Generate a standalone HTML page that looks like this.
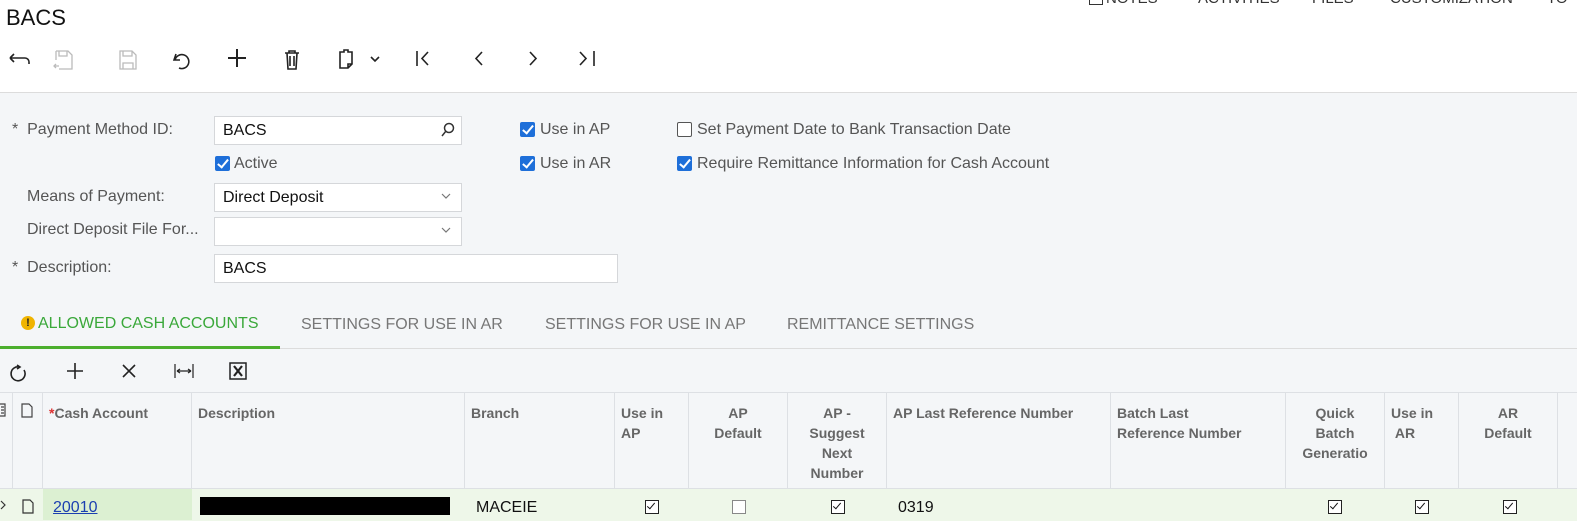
<!DOCTYPE html><html><head><style>
body{margin:0;width:1577px;height:520px;overflow:hidden;font-family:"Liberation Sans",sans-serif;background:#fff;position:relative}
.a{position:absolute}
.lbl{font-size:16px;color:#555}
.inp{position:absolute;background:#fff;border:1px solid #d5d7da;height:29px;box-sizing:border-box;font-size:16px;color:#111;padding:5px 8px}
.cb{position:absolute;width:15px;height:15px;background:#1e6fd9;border-radius:2px}
.cb:after{content:"";position:absolute;left:5px;top:1px;width:4px;height:9px;border:solid #fff;border-width:0 2px 2px 0;transform:rotate(40deg)}
.cbe{position:absolute;width:13px;height:13px;border:1px solid #555;border-radius:2px;background:#fff}
.th{position:absolute;top:393px;height:95px;border-right:1px solid #dde0e4;box-sizing:border-box;font-size:14px;font-weight:bold;color:#666;padding:10px 6px;line-height:20px}
.sc{position:absolute;top:500px;width:12px;height:12px;border:1px solid #222;background:#fff}
.sc:after{content:"";position:absolute;left:3px;top:0px;width:3px;height:7px;border:solid #111;border-width:0 1.5px 1.5px 0;transform:rotate(40deg)}
svg{position:absolute}
</style></head><body>
<div class="a" style="left:6px;top:5px;font-size:22px;color:#111">BACS</div>
<div class="a" style="left:1089px;top:-9px;width:12px;height:12px;border:1px solid #333"></div>
<div class="a" style="left:1106px;top:-10px;font-size:15px;color:#333">NOTES</div>
<div class="a" style="left:1198px;top:-10px;font-size:15px;color:#333">ACTIVITIES</div>
<div class="a" style="left:1312px;top:-10px;font-size:15px;color:#333">FILES</div>
<div class="a" style="left:1390px;top:-10px;font-size:15px;color:#333">CUSTOMIZATION</div>
<div class="a" style="left:1547px;top:-10px;font-size:15px;color:#333">TO</div>
<svg style="left:0;top:40px" width="620" height="40" fill="none" stroke="#222" stroke-width="1.6">
<path d="M10 18h15a4 4 0 0 1 4 4v2M10 18l4-4M10 18l4 4"/>
<g stroke="#bbb" stroke-width="1.3"><path d="M56 11h12l4 4v14H59M56 11v9M59 11v5h8v-5M56 24l-2 2 2 2M54 26h5"/><path d="M120 11h12l4 4v14h-16zM123 11v5h9v-5M123 29v-6h10v6"/></g>
<path d="M176 14l-2 6 6 0M175 20a7 7 0 1 1 4 8"/>
<path d="M237 9v18M228 18h18" stroke-width="2"/>
<path d="M285 13h14M289 13v-2h6v2M287 13l1 16h8l1-16M290 16v10M294 16v10"/>
<path d="M340 12h4v-2h4v2h4v12l-4 4h-8zM348 28v-4h4"/><path d="M371 17l4 4 4-4"/>
<path d="M417 11v15M428 12l-6 6.5 6 6.5"/><path d="M482 12l-6 6.5 6 6.5"/><path d="M530 12l6 6.5-6 6.5"/><path d="M580 12l6 6.5-6 6.5M594 11v15"/>
</svg>
<div class="a" style="left:0;top:92px;width:1577px;height:428px;background:#f4f6f8;border-top:1px solid #dcdcdc"></div>
<div class="a lbl" style="left:12px;top:121px">*&nbsp; Payment Method ID:</div>
<div class="inp" style="left:214px;top:116px;width:248px">BACS</div>
<svg style="left:440px;top:122px" width="16" height="16" fill="none" stroke="#333" stroke-width="1.5"><circle cx="9" cy="6" r="4.5"/><path d="M6 9l-4 5"/></svg>
<div class="cb" style="left:520px;top:122px"></div><div class="a lbl" style="left:540px;top:121px">Use in AP</div>
<div class="cbe" style="left:677px;top:122px"></div><div class="a lbl" style="left:697px;top:121px">Set Payment Date to Bank Transaction Date</div>
<div class="cb" style="left:215px;top:156px"></div><div class="a lbl" style="left:234px;top:155px">Active</div>
<div class="cb" style="left:520px;top:156px"></div><div class="a lbl" style="left:540px;top:155px">Use in AR</div>
<div class="cb" style="left:677px;top:156px"></div><div class="a lbl" style="left:697px;top:155px">Require Remittance Information for Cash Account</div>
<div class="a lbl" style="left:27px;top:188px">Means of Payment:</div>
<div class="inp" style="left:214px;top:183px;width:248px">Direct Deposit</div>
<div class="a lbl" style="left:27px;top:221px">Direct Deposit File For...</div>
<div class="inp" style="left:214px;top:217px;width:248px"></div>
<svg style="left:440px;top:193px" width="12" height="40" fill="none" stroke="#777" stroke-width="1.2"><path d="M2 3l4 4 4-4M2 37l4 4 4-4" transform="translate(0,-2)"/></svg>
<div class="a lbl" style="left:12px;top:259px">*&nbsp; Description:</div>
<div class="inp" style="left:214px;top:254px;width:404px">BACS</div>
<div class="a" style="left:21px;top:316px;width:14px;height:14px;border-radius:50%;background:#f0b400;color:#222;font-size:11px;font-weight:bold;text-align:center;line-height:14px">!</div>
<div class="a" style="left:38px;top:315px;font-size:16px;color:#3aa83a">ALLOWED CASH ACCOUNTS</div>
<div class="a" style="left:301px;top:316px;font-size:16px;color:#777">SETTINGS FOR USE IN AR</div>
<div class="a" style="left:545px;top:316px;font-size:16px;color:#777">SETTINGS FOR USE IN AP</div>
<div class="a" style="left:787px;top:316px;font-size:16px;color:#777">REMITTANCE SETTINGS</div>
<div class="a" style="left:0;top:348px;width:1577px;height:1px;background:#dcdcdc"></div>
<div class="a" style="left:0;top:346px;width:280px;height:3px;background:#4caf2e"></div>
<svg style="left:0;top:358px" width="260" height="28" fill="none" stroke="#222" stroke-width="1.6">
<path d="M17 7l3 2-3 2M20 9a7 7 0 1 0 4 3"/><path d="M75 5v16M67 13h16"/><path d="M123 7l12 12M135 7l-12 12"/>
<path d="M175 6v14M193 6v14M177 13h14M177 13l3-2M177 13l3 2M191 13l-3-2M191 13l-3 2" stroke-width="1.2"/>
<rect x="230" y="5" width="16" height="16" stroke-width="1.5"/><path d="M234 8l8 10M242 8l-8 10" stroke-width="2.2"/>
</svg>
<div class="a" style="left:0;top:392px;width:1577px;height:1px;background:#dde0e4"></div>
<div class="th" style="left:0;width:12px"></div>
<div class="th" style="left:12px;width:31px"></div>
<div class="th" style="left:43px;width:149px"><span style="color:#d33">*</span>Cash Account</div>
<div class="th" style="left:192px;width:273px">Description</div>
<div class="th" style="left:465px;width:150px">Branch</div>
<div class="th" style="left:615px;width:74px">Use in<br>AP</div>
<div class="th" style="left:689px;width:99px;text-align:center">AP<br>Default</div>
<div class="th" style="left:788px;width:99px;text-align:center">AP -<br>Suggest<br>Next<br>Number</div>
<div class="th" style="left:887px;width:224px">AP Last Reference Number</div>
<div class="th" style="left:1111px;width:175px">Batch Last<br>Reference Number</div>
<div class="th" style="left:1286px;width:99px;text-align:center">Quick<br>Batch<br>Generatio</div>
<div class="th" style="left:1385px;width:74px">Use in<br>&nbsp;AR</div>
<div class="th" style="left:1459px;width:99px;text-align:center">AR<br>Default</div>
<svg style="left:0;top:402px" width="40" height="16" fill="none" stroke="#444" stroke-width="1.2"><path d="M0 2h5v12H0M1 5h3M1 8h3M1 11h3"/><path d="M22 2h7l3 3v10H22z"/></svg>
<div class="a" style="left:0;top:488px;width:1577px;height:32px;background:#eef7e9;border-top:1px solid #dde0e4"></div>
<div class="a" style="left:43px;top:489px;width:149px;height:31px;background:#dcf0d2"></div>
<svg style="left:0;top:498px" width="40" height="16" fill="none" stroke="#333" stroke-width="1.2"><path d="M1 3l4 4-4 4"/><path d="M23 2h7l3 3v10H23z"/></svg>
<div class="a" style="left:53px;top:499px;font-size:16px;color:#1a3fb0;text-decoration:underline">20010</div>
<div class="a" style="left:200px;top:497px;width:250px;height:18px;background:#000"></div>
<div class="a" style="left:476px;top:499px;font-size:16px;color:#111">MACEIE</div>
<div class="sc" style="left:645px"></div>
<div class="a" style="left:732px;top:500px;width:12px;height:12px;border:1px solid #888;background:#fff"></div>
<div class="sc" style="left:831px"></div>
<div class="a" style="left:898px;top:499px;font-size:16px;color:#111">0319</div>
<div class="sc" style="left:1328px"></div>
<div class="sc" style="left:1415px"></div>
<div class="sc" style="left:1503px"></div>
</body></html>
